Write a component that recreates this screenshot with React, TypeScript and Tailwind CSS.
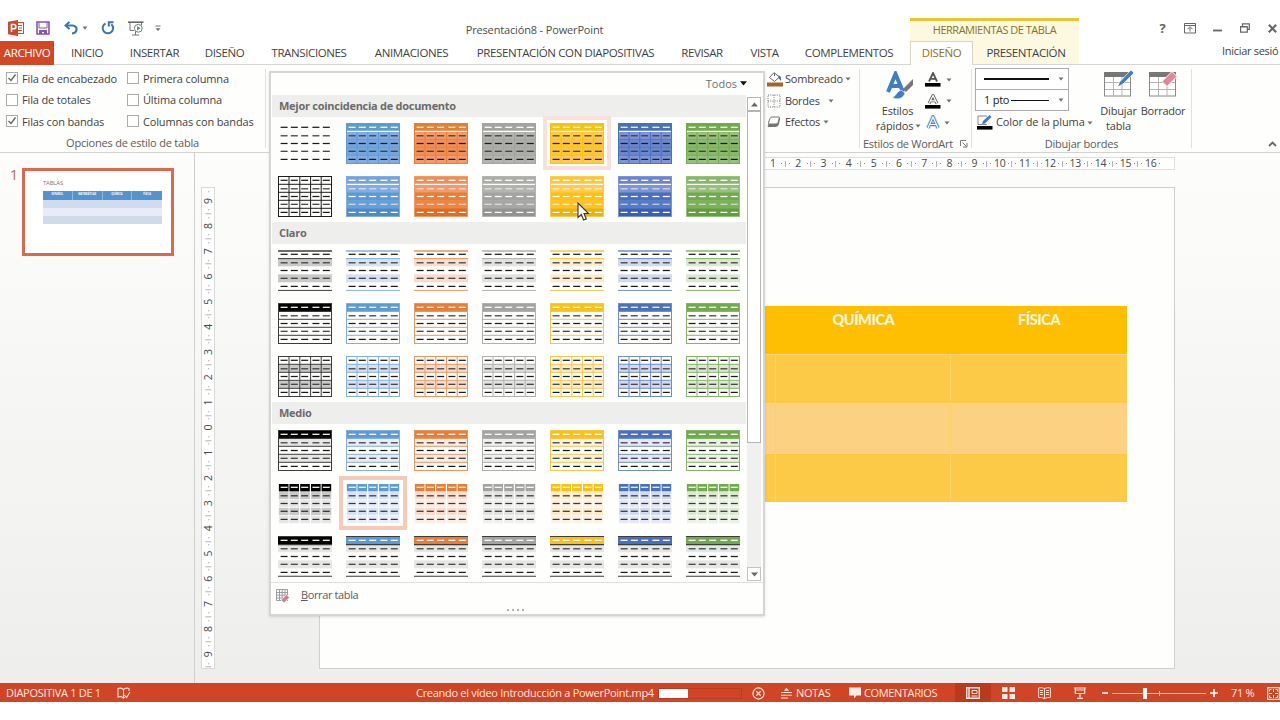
import React from 'react';

type Kind = 'plain' | 'themed' | 'grid' | 'gradient' | 'light1' | 'light2' | 'light3' | 'medium1' | 'medium2' | 'medium3';

interface Theme {
  main: string;
  dark: string;
  soft: string;
  tint: string;
  pale: string;
  line: string;
}

const themes: Theme[] = [
  { main: '#000000', dark: '#000000', soft: '#555555', tint: '#c9c9c9', pale: '#e6e6e6', line: '#3c3c3c' },
  { main: '#5b9bd5', dark: '#4a8bc9', soft: '#83ade0', tint: '#d6e2f3', pale: '#e8edf9', line: '#84afdd' },
  { main: '#e87d33', dark: '#e36c1c', soft: '#f19a6c', tint: '#fadccf', pale: '#fdece6', line: '#ea965f' },
  { main: '#a3a3a1', dark: '#939391', soft: '#b3b3b0', tint: '#e2e2e0', pale: '#efefed', line: '#b0b0ae' },
  { main: '#fbc012', dark: '#eab308', soft: '#fdcb50', tint: '#fcecc9', pale: '#fdf1e4', line: '#f3c94a' },
  { main: '#4770bf', dark: '#3560b4', soft: '#7f95d3', tint: '#d2daee', pale: '#e6e8f5', line: '#6f8ccb' },
  { main: '#70ab4b', dark: '#5fa03a', soft: '#98c07c', tint: '#dbe8d2', pale: '#eaf1e6', line: '#85b469' },
];

const rowY = [0, 8.3, 16.3, 24.3, 32.3, 40.5];
const dashY = [4.3, 12.8, 20.5, 28.3, 36.4];
const colX = [0.5, 11, 21.8, 32.6, 43.2, 53.5];
const dashX = [2.6, 12.8, 23.2, 34.4, 44.8];

const Thumb: React.FC<{ kind: Kind; theme: Theme }> = ({ kind, theme }) => {
  const isBlack = theme.main === '#000000';
  const gridColor = kind === 'grid' ? '#1c1c1c' : kind === 'themed' ? theme.main : theme.line;
  const headFilled = ['themed', 'light2', 'medium1', 'medium3'].includes(kind);
  const hasGrid = kind === 'grid' || kind === 'light3';
  const hasBox = hasGrid || kind === 'light2' || kind === 'medium1';
  const banded = ['light1', 'light3', 'medium1', 'medium3'].includes(kind);
  const bandColor = kind === 'medium3' ? '#e6e6e5' : kind === 'medium1' ? theme.pale : theme.tint;
  const gradient = [theme.soft, theme.soft, theme.main, theme.main, theme.dark];

  const dashColor = (row: number) => {
    if (kind === 'gradient') return row % 2 ? 'rgba(255,255,255,.65)' : '#ffffff';
    if (row === 0 && (headFilled || kind === 'medium2')) return '#ffffff';
    if (kind === 'medium2') return isBlack ? '#2f2f2f' : '#3a3838';
    return row % 2 ? '#3b3b3b' : '#1b1b1b';
  };

  return (
    <svg width="54" height="41" viewBox="0 0 54 41" className="block">
      {kind === 'themed' && (
        <>
          <rect width="54" height="41" fill={theme.main} />
          <rect x="1" y="9" width="52" height="31.5" fill={theme.soft} />
          <rect x="1" y="16.3" width="52" height="8" fill={theme.main} opacity=".35" />
          <rect x="1" y="24.3" width="52" height="8" fill={theme.main} opacity=".35" />
          {colX.map((x) => <path key={x} d={`M${x} 9V41`} stroke={theme.main} />)}
          {rowY.slice(2).map((y) => <path key={y} d={`M0 ${y}H54`} stroke={theme.main} strokeWidth=".7" />)}
          <path d="M1 8.4H53" stroke="#fff" strokeWidth="1.1" />
        </>
      )}
      {kind === 'gradient' && (
        <>
          {gradient.map((c, i) => <rect key={i} y={rowY[i]} width="54" height="8.5" fill={c} />)}
          <rect y="24.3" width="54" height="8" fill={theme.soft} opacity=".3" />
          <rect width="54" height="8" fill={theme.main} opacity=".4" />
          <rect x=".5" y=".5" width="53" height="40" fill="none" stroke={theme.soft} />
          <path d="M1 8.4H53" stroke="#fff" strokeWidth="1.1" />
        </>
      )}
      {banded && [1, 3].map((r) => <rect key={r} y={rowY[r]} width="54" height="8" fill={bandColor} />)}
      {headFilled && kind !== 'themed' && <rect width="54" height="8.8" fill={theme.main} />}
      {kind === 'medium2' &&
        dashX.map((x, i) => (
          <g key={x}>
            <rect x={colX[i] + 0.4} y="1" width="9.6" height="7.4" fill={theme.main} />
            {[1, 2, 3, 4].map((r) => (
              <rect key={r} x={colX[i] + 0.4} y={rowY[r] + 0.6} width="9.7" height="7.3" fill={r % 2 ? theme.tint : theme.pale} />
            ))}
          </g>
        ))}
      {hasBox && <rect x=".5" y=".5" width="53" height="40" fill="none" stroke={gridColor} />}
      {hasBox && rowY.slice(1, 5).map((y) => <path key={y} d={`M0 ${y}H54`} stroke={gridColor} />)}
      {hasGrid && colX.slice(1, 5).map((x) => <path key={x} d={`M${x} 0V41`} stroke={gridColor} />)}
      {kind === 'light1' && (
        <>
          <path d="M0 1H54" stroke={theme.line} strokeWidth="1.3" />
          <path d="M0 8.6H54M0 40.4H54" stroke={theme.line} />
        </>
      )}
      {kind === 'medium3' && <path d="M0 .5H54M0 8.6H54M0 40.3H54" stroke="#3d3d3d" strokeWidth="1.1" />}
      {dashY.map((y, r) =>
        dashX.map((x) => <path key={`${x}-${y}`} d={`M${x} ${y}h7`} stroke={dashColor(r)} strokeWidth="1.25" />)
      )}
    </svg>
  );
};

interface SectionProps {
  title: string;
  rows: Kind[];
  className: string;
  marked: number;
  markClass: string;
}

const GallerySection: React.FC<SectionProps> = ({ title, rows, className, marked, markClass }) => (
  <div>
    <div className="h-[22px] bg-[#eeeeed] pl-[7px] text-[11px] leading-[22px] font-bold tracking-[-0.27px] text-[#6b6b6b]">{title}</div>
    <div className={`grid grid-cols-[repeat(7,54px)] content-start gap-x-[14px] gap-y-[12px] pt-[6px] pl-[6px] ${className}`}>
      {rows.map((kind, r) =>
        themes.map((theme, c) => {
          const shown = c === 0 && kind === 'themed' ? 'plain' : c === 0 && kind === 'gradient' ? 'grid' : kind;
          return (
            <div key={`${r}-${c}`} className="relative h-[41px]">
              {r * 7 + c === marked && <span className={`absolute -top-[7px] -left-[7px] h-[54px] w-[68px] border-4 ${markClass}`} />}
              <Thumb kind={shown} theme={theme} />
            </div>
          );
        })
      )}
    </div>
  </div>
);

const Caret: React.FC<{ className?: string }> = ({ className = '' }) => (
  <svg width="6" height="4" viewBox="0 0 6 4" className={`shrink-0 ${className}`}>
    <path d="M.5 .5h5L3 3.5z" fill="#707070" />
  </svg>
);

const Check: React.FC<{ label: string; checked?: boolean }> = ({ label, checked }) => (
  <div className="flex h-[21.5px] items-center gap-[4px]">
    <span className="-mt-px flex h-[12px] w-[12px] shrink-0 items-center justify-center border border-[#ababab] bg-white">
      {checked && (
        <svg width="10" height="10" viewBox="0 0 10 10">
          <path d="M1.5 5L4 7.5L8.5 1.5" fill="none" stroke="#666" strokeWidth="1.4" />
        </svg>
      )}
    </span>
    <span className="whitespace-nowrap">{label}</span>
  </div>
);

const tabs = [
  { label: 'INICIO', width: 'w-[66px]' },
  { label: 'INSERTAR', width: 'w-[69px]' },
  { label: 'DISEÑO', width: 'w-[71px]' },
  { label: 'TRANSICIONES', width: 'w-[98px]' },
  { label: 'ANIMACIONES', width: 'w-[107px]' },
  { label: 'PRESENTACIÓN CON DIAPOSITIVAS', width: 'w-[201px]' },
  { label: 'REVISAR', width: 'w-[72px]' },
  { label: 'VISTA', width: 'w-[53px]' },
  { label: 'COMPLEMENTOS', width: 'w-[116px]' },
];

const TitleBar = () => (
  <div className="flex h-[41px] shrink-0">
    <div className="flex w-[361px] items-start pt-[20px] pl-[8px]">
      <svg width="16" height="16" viewBox="0 0 16 16">
        <rect x="8" y="2.5" width="7.5" height="11" fill="#fff" stroke="#d24726" />
        <path d="M10 5.5h4M11 8h3M10 10.5h4" stroke="#d24726" strokeWidth="1.2" />
        <path d="M0 1.8L10 0V16L0 14.2z" fill="#d24726" />
        <path d="M3.5 12V4.5H5.7A2.1 2.1 0 0 1 5.7 8.8H3.5" fill="none" stroke="#fff" strokeWidth="1.6" />
      </svg>
      <svg width="14" height="14" viewBox="0 0 14 14" className="mt-[1px] ml-[12px]">
        <path d="M1 1H13V13H1z" fill="#fff" stroke="#8855a8" strokeWidth="1.6" />
        <path d="M3 1V7H11V1" fill="none" stroke="#8855a8" strokeWidth="1" />
        <path d="M3 9H11V13H8V11H6V13H3z" fill="#8855a8" />
      </svg>
      <svg width="14" height="14" viewBox="0 0 14 14" className="mt-[1px] ml-[14px]">
        <path d="M5.5 1L1.5 4.5L5.5 8" fill="none" stroke="#3d74b5" strokeWidth="2" />
        <path d="M2 4.5H8.5C14 4.5 14 12 8 12.5" fill="none" stroke="#3d74b5" strokeWidth="2.2" />
      </svg>
      <Caret className="mt-[6px] ml-[4px]" />
      <svg width="14" height="14" viewBox="0 0 14 14" className="mt-[1px] ml-[13px]">
        <path d="M4.5 2.5A5.2 5.2 0 1 0 10.3 3.2" fill="none" stroke="#3d74b5" strokeWidth="2" />
        <path d="M7.8 5.5V1.2H12.5" fill="none" stroke="#3d74b5" strokeWidth="2" />
      </svg>
      <svg width="16" height="15" viewBox="0 0 16 15" className="mt-[1px] ml-[13px]">
        <path d="M0 1.2H15.5" stroke="#666" strokeWidth="1.6" />
        <path d="M2 2V9.5H6M13.5 2V4M4 14H11M7.5 10V14" fill="none" stroke="#777" />
        <circle cx="10.3" cy="7.3" r="3.9" fill="#fff" stroke="#777" />
        <path d="M9 5L12.6 7.3L9 9.6z" fill="#559a78" />
      </svg>
      <svg width="6" height="7" viewBox="0 0 6 7" className="mt-[5px] ml-[11px]">
        <path d="M.5 1H5.5" stroke="#707070" />
        <path d="M.5 3.2h5L3 6z" fill="#707070" />
      </svg>
    </div>
    <div className="w-[347px] pt-[22px] text-center text-[11px] leading-4 tracking-[-0.15px] text-[#4d4d4d]">Presentación8 - PowerPoint</div>
    <div className="w-[202px]" />
    <div className="mt-[18px] h-[23px] w-[169px] border-t-[3px] border-[#e7c62f] bg-[#fdf9e1] text-center text-[11px] leading-[17px] tracking-[-0.5px] whitespace-nowrap text-[#8c7220]">
      HERRAMIENTAS DE TABLA
    </div>
    <div className="flex flex-1 items-start pt-[20px] pl-[79px]">
      <span className="w-[9px] text-center text-[13px] leading-4 font-bold text-[#666]">?</span>
      <svg width="12" height="11" viewBox="0 0 12 11" className="mt-[3px] ml-[17px]">
        <path d="M.5 .5H11.5V10H.5zM.5 2.5H11.5M6 8.5V5" fill="none" stroke="#666" />
        <path d="M3.5 6.2L6 3.7L8.5 6.2" fill="none" stroke="#666" />
      </svg>
      <svg width="9" height="3" viewBox="0 0 9 3" className="mt-[9px] ml-[17px]">
        <path d="M0 1.5H9" stroke="#666" strokeWidth="1.8" />
      </svg>
      <svg width="10" height="10" viewBox="0 0 10 10" className="mt-[3px] ml-[18px]">
        <path d="M2.5 3V.8H9.3V6.3H7.5M.6 3.5H7.3V9.2H.6zM.6 4H7.3" fill="none" stroke="#666" strokeWidth="1.2" />
      </svg>
      <svg width="9" height="9" viewBox="0 0 9 9" className="mt-[4px] ml-[18px]">
        <path d="M.8 .8L8.2 8.2M8.2 .8L.8 8.2" stroke="#666" strokeWidth="2" />
      </svg>
    </div>
  </div>
);

const TabBar = () => (
  <div className="flex h-[24px] shrink-0 border-b border-[#d6d6d4] text-[11.5px] leading-[23px] tracking-[-0.38px] whitespace-nowrap text-[#3f3f3f]">
    <div className="h-[24px] w-[54px] shrink-0 bg-[#d24726] text-center text-white">ARCHIVO</div>
    {tabs.map((tab) => (
      <div key={tab.label} className={`${tab.width} shrink-0 text-center`}>{tab.label}</div>
    ))}
    <div className="ml-[3px] h-[24px] w-[63px] shrink-0 border-x border-t border-[#d9d6c8] bg-[#fefefc] text-center leading-[22px] text-[#8c7220]">DISEÑO</div>
    <div className="h-[23px] w-[106px] shrink-0 bg-[#fdf9e1] text-center">PRESENTACIÓN</div>
    <div className="shrink-0 pl-[143px] text-[11px] leading-[19px] tracking-[-0.3px]">Iniciar sesió</div>
  </div>
);

const Ribbon = () => (
  <div className="flex h-[88px] shrink-0 border-b border-[#d2d2d0] bg-[#fefefc] text-[11px] tracking-[-0.15px] text-[#3f3f3f]">
    <div className="my-[4px] flex w-[266px] flex-col border-r border-[#e0e0de]">
      <div className="flex h-[65px] pl-[6px]">
        <div className="w-[121px] -mt-[1px]">
          <Check label="Fila de encabezado" checked />
          <Check label="Fila de totales" />
          <Check label="Filas con bandas" checked />
        </div>
        <div className="-mt-[1px]">
          <Check label="Primera columna" />
          <Check label="Última columna" />
          <Check label="Columnas con bandas" />
        </div>
      </div>
      <div className="text-center leading-[19px] tracking-[-0.21px] text-[#5c5c5c]">Opciones de estilo de tabla</div>
    </div>
    <div className="w-[501px] shrink-0" />
    <div className="my-[4px] flex w-[93px] flex-col border-r border-[#e0e0de]">
      <div className="-mt-px flex h-[22px] items-center">
        <svg width="16" height="16" viewBox="0 0 16 16" className="shrink-0">
          <rect y="11.5" width="16" height="4" fill="#a5622a" />
          <path d="M7 1.5L2.5 6.5L7.5 10.5L12.5 6L7.5 2V5" fill="#fff" stroke="#666" />
          <path d="M11.5 4.5C14.5 5 14 7.5 14 10L11.5 7z" fill="#3d74b5" />
        </svg>
        <span className="ml-[2px] tracking-[-0.2px]">Sombreado</span>
        <Caret className="ml-[2px]" />
      </div>
      <div className="flex h-[21.5px] items-center">
        <svg width="14" height="14" viewBox="0 0 14 14" className="shrink-0">
          <path d="M1 1H13V13H1zM7 1V13M1 7H13" fill="none" stroke="#777" strokeDasharray="1 1.2" />
        </svg>
        <span className="ml-[4px] tracking-[-0.3px]">Bordes</span>
        <Caret className="ml-[8px]" />
      </div>
      <div className="flex h-[21.5px] items-center">
        <svg width="14" height="12" viewBox="0 0 14 12" className="shrink-0">
          <path d="M4.5 1H12Q13.5 1 13 3L12 8Q11 11 8.5 11H2Q0 11 1 9z" fill="#777" />
          <path d="M5 1H11.5Q12.5 1 12 3L11 6.5Q10.5 8 9 8H2.5Q1 8 1.7 6L3 2.5Q3.5 1 5 1z" fill="#fff" stroke="#777" />
        </svg>
        <span className="ml-[4px] tracking-[-0.3px]">Efectos</span>
        <Caret className="ml-[3px]" />
      </div>
    </div>
    <div className="my-[4px] flex w-[112px] flex-col border-r border-[#e0e0de]">
      <div className="flex h-[65px]">
        <div className="flex w-[63px] flex-col items-center pl-[12px]">
          <svg width="28" height="30" viewBox="0 0 28 30" className="mt-[2px] ml-[5px] shrink-0">
            <path d="M2 21L9.5 3L17 21M5 15H14" fill="none" stroke="#3f7dc4" strokeWidth="4" />
            <path d="M27 8L17 18L20 21L27 14z" fill="#777" />
            <path d="M15 19L19 22C18 27 11 30 6 26C10 26 10 21 15 19z" fill="#3f7dc4" stroke="#fff" strokeWidth=".6" />
          </svg>
          <span className="mt-[2px] leading-[15px]">Estilos</span>
          <span className="flex items-center gap-[2px] pl-[2px] leading-[15px]">rápidos<Caret /></span>
        </div>
        <div className="flex flex-col pl-[2px]">
          <div className="flex h-[21.5px] items-center gap-[5px]">
            <svg width="16" height="15" viewBox="0 0 16 15">
              <path d="M4 9.5L8 1L12 9.5M5.5 6.8H10.5" fill="none" stroke="#555" strokeWidth="1.8" />
              <rect y="11" width="15.5" height="3.6" fill="#000" />
            </svg>
            <Caret />
          </div>
          <div className="flex h-[21.5px] items-center gap-[5px]">
            <svg width="16" height="15" viewBox="0 0 16 15">
              <path d="M4 9.5L8 1.5L12 9.5M5.5 6.8H10.5" fill="none" stroke="#666" strokeWidth="3" />
              <path d="M4 9.5L8 1.5L12 9.5M5.5 6.8H10.5" fill="none" stroke="#fff" strokeWidth="1.2" />
              <rect y="11" width="15.5" height="3.6" fill="#000" />
            </svg>
            <Caret />
          </div>
          <div className="flex h-[21.5px] items-center gap-[3px]">
            <svg width="16" height="15" viewBox="0 0 16 15">
              <path d="M3 13L8 2L13 13M5 9.5H11" fill="none" stroke="#bcd5f0" strokeWidth="4.5" />
              <path d="M3 13L8 2L13 13M5 9.5H11" fill="none" stroke="#4b83c6" strokeWidth="2.8" />
              <path d="M3 13L8 2L13 13M5 9.5H11" fill="none" stroke="#fff" strokeWidth="1.2" />
            </svg>
            <Caret />
          </div>
        </div>
      </div>
      <div className="flex items-center pl-[3px] leading-[19px] tracking-[-0.27px] text-[#5c5c5c]">
        Estilos de WordArt
        <svg width="8" height="8" viewBox="0 0 8 8" className="mt-[2px] ml-[7px]">
          <path d="M.5 6V.5H6M2.5 2.5L6.5 6.5M7 3V7H3" fill="none" stroke="#777" />
        </svg>
      </div>
    </div>
    <div className="my-[4px] flex w-[220px] flex-col border-r border-[#e0e0de]">
      <div className="flex h-[65px]">
        <div className="-mt-[1px] w-[122px] pl-[3px]">
          <div className="flex h-[22px] w-[94px] items-center border border-[#ababab] bg-white pl-[8px]">
            <span className="h-[2px] w-[65px] bg-[#111]" />
            <Caret className="ml-[9px]" />
          </div>
          <div className="-mt-px flex h-[22px] w-[94px] items-center border border-[#ababab] bg-white pl-[8px] text-[#222]">
            <span className="w-[27px] tracking-[-0.25px]">1 pto</span>
            <span className="h-px w-[38px] bg-[#111]" />
            <Caret className="ml-[9px]" />
          </div>
          <div className="flex h-[23px] items-center pl-[2px]">
            <svg width="16" height="15" viewBox="0 0 16 15" className="shrink-0">
              <path d="M10 1H1V9.5H10" fill="none" stroke="#888" />
              <path d="M5 9L6 6L12.5 0L14.5 2L8 8.5z" fill="#3f7dc4" />
              <rect y="11" width="15.5" height="3.6" fill="#000" />
            </svg>
            <span className="ml-[3px] tracking-[-0.1px] whitespace-nowrap">Color de la pluma</span>
            <Caret className="ml-[2px]" />
          </div>
        </div>
        <div className="flex w-[49px] flex-col items-center leading-[15px]">
          <svg width="30" height="28" viewBox="0 0 30 28" className="mt-[1px] shrink-0">
            <rect x=".5" y="3" width="26" height="23" fill="#fff" stroke="#888" />
            <rect y="2" width="27" height="5" fill="#777" />
            <path d="M9.5 7V26M18 7V26M1 12.5H26M1 19.5H26" stroke="#b5b5b5" />
            <path d="M13.5 17L15.5 12L27 0L30 3L19 14z" fill="#3f7dc4" stroke="#fff" strokeWidth=".7" />
          </svg>
          <span className="mt-[5px]">Dibujar</span>
          <span>tabla</span>
        </div>
        <div className="flex w-[40px] flex-col items-center leading-[15px]">
          <svg width="28" height="28" viewBox="0 0 28 28" className="mt-[1px] shrink-0">
            <rect x=".5" y="3" width="26" height="23" fill="#fff" stroke="#888" />
            <rect y="2" width="27" height="5" fill="#777" />
            <path d="M9.5 7V26M18 7V26M1 12.5H26M1 19.5H26" stroke="#b5b5b5" />
            <path d="M13 11.5L23 1.5L28 6.5L18 16.5z" fill="#e4849b" stroke="#fff" />
          </svg>
          <span className="mt-[5px] tracking-[-0.25px]">Borrador</span>
        </div>
      </div>
      <div className="text-center leading-[19px] tracking-[-0.2px] text-[#5c5c5c]">Dibujar bordes</div>
    </div>
    <div className="flex flex-1 items-end justify-end pr-[3px] pb-[5px]">
      <svg width="9" height="6" viewBox="0 0 9 6">
        <path d="M1 5L4.5 1.5L8 5" fill="none" stroke="#666" strokeWidth="1.8" />
      </svg>
    </div>
  </div>
);

const RulerStep: React.FC<{ value: number }> = ({ value }) => (
  <div className="flex w-[25.2px] shrink-0 items-center justify-between">
    <span className="-ml-[0.5px] h-[6px] w-px bg-[#b5b5b5]" />
    <span className="h-px w-px bg-[#888]" />
    <span className="flex w-[11px] justify-center tracking-[-0.3px]">{Math.abs(value)}</span>
    <span className="h-px w-px bg-[#888]" />
    <span className="w-0" />
  </div>
);

const range = (limit: number) => Array.from({ length: limit * 2 + 1 }, (_, i) => i - limit);

const slideColumns = ['ESPAÑOL', 'MATEMÁTICAS', 'QUÍMICA', 'FÍSICA'];

const Workspace = () => (
  <div className="flex h-[530px] shrink-0 bg-linear-to-b from-[#fdfdfb] to-[#eeeeec]">
    <div className="flex w-[195px] items-start border-r border-[#cfcfcd] pt-[15px]">
      <span className="w-[22px] pl-[10px] text-[14px] leading-[13px] text-[#c8614c]">1</span>
      <div className="h-[88px] w-[152px] border-[3px] border-[#d9694f] bg-white pt-[7px] pl-[18px]">
        <div className="h-[13px] text-[6px] leading-[11px] tracking-[-0.2px] text-[#777]">TABLAS</div>
        <div className="grid w-[119px] grid-cols-4">
          {slideColumns.map((c) => (
            <div key={c} className="h-[9px] border-r border-[#8fb9e0] bg-[#5593cf] text-center text-[2.5px] leading-[6px] font-bold text-white last:border-0">{c}</div>
          ))}
        </div>
        <div className="h-[8px] w-[119px] bg-[#cfdcf0]" />
        <div className="h-[8px] w-[119px] bg-[#e9ebf6]" />
        <div className="h-[8px] w-[119px] bg-[#d1daec]" />
      </div>
    </div>
    <div className="w-[124px] pt-[34px] pl-[6px]">
      <div className="flex h-[482px] w-[14px] items-center justify-center overflow-hidden border border-[#d9d9d7] bg-white">
        <div className="flex h-[12px] shrink-0 -rotate-90 justify-center text-[10.5px] leading-[12px] text-[#484848]">
          {range(9).map((v) => <RulerStep key={v} value={v} />)}
        </div>
      </div>
    </div>
    <div className="w-[856px] pt-[4px]">
      <div className="flex h-[13px] w-[856px] items-center justify-center overflow-hidden border border-[#dededc] bg-white pl-px text-[10.5px] leading-[11px] text-[#484848]">
        {range(16).map((v) => <RulerStep key={v} value={v} />)}
      </div>
      <div className="mt-[17px] h-[482px] w-[856px] border border-[#cfcfcd] bg-[#fefefd] pt-[118px] pl-[104px]">
        <div className="grid w-[703px] grid-cols-4 bg-[#febf02]">
          {slideColumns.map((c) => (
            <div key={c} className="h-[48px] pt-[4px] text-center font-['Lato'] text-[14.5px] leading-[20px] font-black tracking-[-0.45px] text-[#fff6dd]">{c}</div>
          ))}
        </div>
        {['bg-[#fdca48]', 'bg-[#fdd182]', 'bg-[#fdca48]'].map((bg, i) => (
          <div key={i} className={`grid h-[49.3px] w-[703px] grid-cols-4 border-t border-[#fdd57c] ${bg}`}>
            <div className="border-r border-[#fcd265]" />
            <div className="border-r border-[#fcd265]" />
            <div className="border-r border-[#fcd265]" />
            <div />
          </div>
        ))}
      </div>
    </div>
  </div>
);

const StatusBar = () => (
  <div className="flex h-[19px] shrink-0 items-center bg-[#d04525] pt-px text-[11px] tracking-[-0.3px] whitespace-nowrap text-[#ffeae2]">
    <span className="w-[117px] shrink-0 pl-[6px]">DIAPOSITIVA 1 DE 1</span>
    <svg width="14" height="13" viewBox="0 0 14 13" className="shrink-0">
      <path d="M6.5 2.5Q4 .5 1 1.5V10Q4 9 6.5 11V2.5Q9 .5 12 1.5V4M6.5 11L8 10M7.5 8L9.5 10.5L13 5" fill="none" stroke="#ffe1d6" strokeWidth="1.1" />
    </svg>
    <span className="ml-[285px] w-[242px] shrink-0 tracking-[-0.29px]">Creando el vídeo Introducción a PowerPoint.mp4</span>
    <div className="flex h-[11px] w-[84px] shrink-0 border border-[#bd3b1e]">
      <span className="w-[29px] bg-white" />
    </div>
    <svg width="13" height="13" viewBox="0 0 13 13" className="ml-[10px] shrink-0">
      <circle cx="6.5" cy="6.5" r="5.6" fill="none" stroke="#ffe1d6" strokeWidth="1.1" />
      <path d="M4.3 4.3L8.7 8.7M8.7 4.3L4.3 8.7" stroke="#ffe1d6" strokeWidth="1.3" />
    </svg>
    <svg width="11" height="12" viewBox="0 0 11 12" className="ml-[16px] shrink-0">
      <path d="M0 5.5H11M0 8.2H11M0 11H7" stroke="#ffe1d6" strokeWidth="1.1" />
      <path d="M2.8 3.8L5.5 .8L8.2 3.8z" fill="#ffe1d6" />
    </svg>
    <span className="ml-[4px] w-[53px] shrink-0">NOTAS</span>
    <svg width="12" height="12" viewBox="0 0 12 12" className="shrink-0">
      <path d="M0 .5H12V8.5H7.5L5 11.5V8.5H0z" fill="#ffece5" />
    </svg>
    <span className="ml-[3px] w-[91px] shrink-0 tracking-[-0.37px]">COMENTARIOS</span>
    <div className="-mt-px flex h-[19px] w-[36px] shrink-0 items-center justify-center bg-[#b93a1c]">
      <svg width="14" height="12" viewBox="0 0 14 12">
        <path d="M.7 .7H13.3V11.3H.7zM3 .7V11.3" fill="none" stroke="#ffe9e1" strokeWidth="1.4" />
        <path d="M6 3.5H11V6.5H6zM5.5 9H11.5" fill="none" stroke="#ffe9e1" />
      </svg>
    </div>
    <svg width="13" height="12" viewBox="0 0 13 12" className="ml-[11px] shrink-0">
      <path d="M0 0H5.5V5H0zM7.5 0H13V5H7.5zM0 7H5.5V12H0zM7.5 7H13V12H7.5z" fill="#ffe9e1" />
    </svg>
    <svg width="13" height="12" viewBox="0 0 13 12" className="ml-[23px] shrink-0">
      <path d="M6.5 1.5Q3.5 0 .6 1V10.5Q3.5 10 6.5 11.5Q9.5 10 12.4 10.5V1Q9.5 0 6.5 1.5V11.5M2 3.5H5M2 5.5H5M2 7.5H5M8 3.5H11M8 5.5H11M8 7.5H11" fill="none" stroke="#ffd9cc" strokeWidth="1" />
    </svg>
    <svg width="12" height="12" viewBox="0 0 12 12" className="ml-[23px] shrink-0">
      <path d="M0 1H12M1.3 1V6.5H10.7V1M1.5 3H10.5M6 6.5V11M3 11.3H9" fill="none" stroke="#ffe1d6" strokeWidth="1.2" />
    </svg>
    <svg width="6" height="4" viewBox="0 0 6 4" className="ml-[16px] shrink-0">
      <path d="M0 2H6" stroke="#fff" strokeWidth="1.7" />
    </svg>
    <div className="ml-[4px] flex w-[94px] shrink-0 items-center">
      <span className="h-px w-[31px] bg-[#ffc9b9]" />
      <span className="h-[11px] w-[4px] bg-white" />
      <span className="h-px w-[12px] bg-[#ffc9b9]" />
      <span className="h-[5px] w-px bg-[#ffc9b9]" />
      <span className="h-px flex-1 bg-[#ffc9b9]" />
    </div>
    <svg width="8" height="8" viewBox="0 0 8 8" className="ml-[4px] shrink-0">
      <path d="M0 4H8M4 0V8" stroke="#fff" strokeWidth="1.7" />
    </svg>
    <span className="ml-[13px] w-[36px] shrink-0">71 %</span>
    <svg width="13" height="13" viewBox="0 0 13 13" className="shrink-0">
      <path d="M.7 .7H12.3V12.3H.7z" fill="none" stroke="#ffe1d6" strokeWidth="1.2" />
      <path d="M6.5 2V5M6.5 8V11M2 6.5H5M8 6.5H11M2.5 4.5V2.5H4.5M8.5 2.5H10.5V4.5M10.5 8.5V10.5H8.5M4.5 10.5H2.5V8.5" fill="none" stroke="#ffe1d6" />
    </svg>
  </div>
);

const StyleGallery = () => (
  <div className="absolute top-[70.5px] left-[269px] flex h-[545px] w-[496px] flex-col border-2 border-[#d5d5d3] bg-[#fefefd] shadow-sm">
    <div className="flex h-[22.5px] items-center justify-end gap-[3px] pr-[16px] text-[11px] text-[#6e6e6e]">
      Todos
      <svg width="7" height="5" viewBox="0 0 7 5">
        <path d="M0 .3H7L3.5 4.5z" fill="#111" />
      </svg>
    </div>
    <div className="flex h-[488px] border-b border-[#dededc]">
      <div className="ml-[1px] w-[474px]">
        <GallerySection title="Mejor coincidencia de documento" rows={['themed', 'gradient']} className="h-[105px]" marked={4} markClass="border-[#fae0da]" />
        <GallerySection title="Claro" rows={['light1', 'light2', 'light3']} className="h-[158px]" marked={-1} markClass="" />
        <GallerySection title="Medio" rows={['medium1', 'medium2', 'medium3']} className="h-[158px]" marked={8} markClass="border-[#f5cbb8]" />
      </div>
      <div className="mt-[2px] ml-[1px] flex h-[484px] w-[14px] flex-col bg-[#f0f0ef]">
        <div className="flex h-[14px] items-center justify-center border border-[#b5b5b3] bg-white">
          <svg width="7" height="5" viewBox="0 0 7 5"><path d="M0 4.5H7L3.5 .5z" fill="#666" /></svg>
        </div>
        <div className="h-[332px] border border-[#b5b5b3] bg-white" />
        <div className="mt-auto flex h-[14px] items-center justify-center border border-[#c3c3c1] bg-white">
          <svg width="7" height="5" viewBox="0 0 7 5"><path d="M0 .5H7L3.5 4.5z" fill="#666" /></svg>
        </div>
      </div>
    </div>
    <div className="flex h-[25px] items-center pl-[5px] text-[11px] tracking-[-0.38px] text-[#5c5c5c]">
      <svg width="14" height="14" viewBox="0 0 14 14">
        <path d="M.5 .5H11.5V11.5H.5zM.5 3.5H11.5M.5 6.2H11.5M.5 9H11.5M3.5 .5V11.5M6.2 .5V11.5M9 .5V11.5" fill="none" stroke="#8f979c" strokeWidth=".9" />
        <path d="M5 11L10.5 5.5L13.5 8.5L8 14z" fill="#dd7d97" stroke="#fff" strokeWidth=".6" />
      </svg>
      <span className="ml-[11px]"><u>B</u>orrar tabla</span>
    </div>
    <div className="flex justify-center gap-[3px] pt-px pr-[3px]">
      {[0, 1, 2, 3].map((n) => <span key={n} className="h-[2px] w-[2px] bg-[#b0b0b0]" />)}
    </div>
  </div>
);

const App: React.FC = () => (
  <div className="relative flex h-[720px] w-[1280px] flex-col overflow-hidden bg-white font-['Open_Sans','Noto_Sans',sans-serif]">
    <TitleBar />
    <TabBar />
    <Ribbon />
    <Workspace />
    <StatusBar />
    <StyleGallery />
    <svg width="13" height="20" viewBox="0 0 13 20" className="absolute top-[202px] left-[577px]">
      <path d="M1 1V15.5L4.3 12.5L6.6 18L9.3 17L7 11.5H11.5z" fill="#fff" stroke="#333" strokeWidth="1.1" />
    </svg>
  </div>
);

export default App;
